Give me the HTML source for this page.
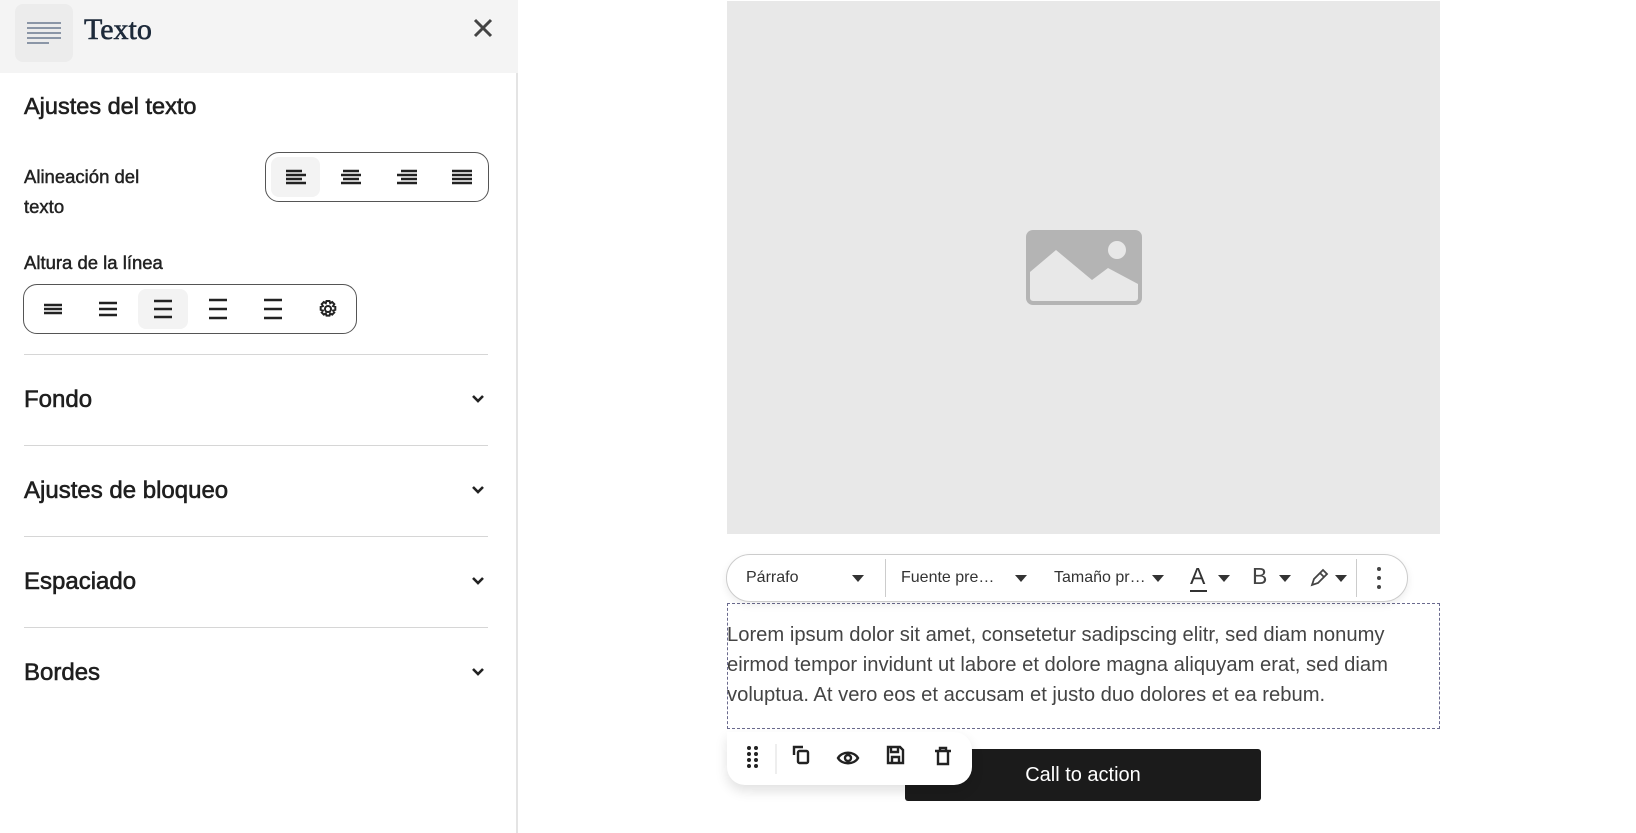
<!DOCTYPE html>
<html><head><meta charset="utf-8"><style>
*{box-sizing:border-box;margin:0;padding:0}
body{width:1636px;height:833px;position:relative;overflow:hidden;background:#fff;font-family:"Liberation Sans",Arial,sans-serif;color:#1e1e1e}
.a{position:absolute}
.side{left:0;top:0;width:518px;height:833px;border-right:2px solid #e4e4e4;background:#fff}
.hdr{left:0;top:0;width:518px;height:73px;background:#f4f4f4}
.sec{left:24px;font-size:24px;color:#1f1f1f;-webkit-text-stroke:.6px #1f1f1f}
.hr{left:24px;width:464px;height:1px;background:#d6d6d6}
.chev{left:470px}
.lbl{font-size:18.5px;color:#222;-webkit-text-stroke:.45px #222}
.grp{border:1.5px solid #555;border-radius:14px;background:#fff}
.tb{font-size:16px;color:#333}
.car{width:0;height:0;border-left:6px solid transparent;border-right:6px solid transparent;border-top:7px solid #333}
</style></head><body>
<div class="a side"></div>
<div class="a hdr"></div>
<div class="a" style="left:15px;top:4px;width:58px;height:58px;border-radius:8px;background:#ececec"></div>
<svg class="a" style="left:27px;top:22px" width="36" height="24"><g stroke="#6b7a90" stroke-width="1.6"><line x1="0" y1="1" x2="34" y2="1"/><line x1="0" y1="6" x2="34" y2="6"/><line x1="0" y1="11" x2="34" y2="11"/><line x1="0" y1="16" x2="34" y2="16"/><line x1="0" y1="21" x2="22" y2="21"/></g></svg>
<div class="a" style="left:84px;top:13px;font-family:'Liberation Serif',serif;font-size:30px;color:#1d2a3a;-webkit-text-stroke:.6px #1d2a3a">Texto</div>
<svg class="a" style="left:473px;top:18px" width="20" height="20"><path d="M2 2L18 18M18 2L2 18" stroke="#444" stroke-width="3"/></svg>
<div class="a" style="left:24px;top:93px;font-size:23.5px;color:#1f1f1f;-webkit-text-stroke:.6px #1f1f1f">Ajustes del texto</div>
<div class="a lbl" style="left:24px;top:162px;line-height:30px">Alineación del<br>texto</div>
<div class="a grp" style="left:265px;top:152px;width:224px;height:50px"></div>
<div class="a" style="left:271px;top:157px;width:49px;height:40px;border-radius:8px;background:#f3f3f3"></div>
<svg class="a" style="left:265px;top:152px" width="224" height="50"><g stroke="#222" stroke-width="2.4">
<path d="M21 19h16M21 23h20M21 27h16M21 31h20"/>
<path d="M78 19h16M76 23h20M78 27h16M76 31h20"/>
<path d="M136 19h16M132 23h20M136 27h16M132 31h20"/>
<path d="M187 19h20M187 23h20M187 27h20M187 31h20"/></g></svg>
<div class="a lbl" style="left:24px;top:252px">Altura de la línea</div>
<div class="a grp" style="left:23px;top:284px;width:334px;height:50px"></div>
<div class="a" style="left:138px;top:289px;width:50px;height:40px;border-radius:8px;background:#f3f3f3"></div>
<svg class="a" style="left:23px;top:284px" width="334" height="50"><g stroke="#222" stroke-width="2.4">
<path d="M21 21h18M21 25h18M21 29h18"/>
<path d="M76 19h18M76 25h18M76 31h18"/>
<path d="M131 17h18M131 25h18M131 33h18"/>
<path d="M186 16h18M186 25h18M186 34h18"/>
<path d="M241 16h18M241 25h18M241 34h18"/></g>
<g transform="translate(305 25)" fill="none" stroke="#222" stroke-width="2"><circle r="3"/><path d="M-1.5 -8h3l.7 2.2 2-1.2 2.1 2.1-1.2 2 2.2.7v3l-2.2.7 1.2 2-2.1 2.1-2-1.2-.7 2.2h-3l-.7-2.2-2 1.2-2.1-2.1 1.2-2-2.2-.7v-3l2.2-.7-1.2-2 2.1-2.1 2 1.2z"/></g></svg>
<div class="a hr" style="top:354px"></div>
<div class="a hr" style="top:445px"></div>
<div class="a hr" style="top:536px"></div>
<div class="a hr" style="top:627px"></div>
<div class="a sec" style="top:386px">Fondo</div>
<div class="a sec" style="top:477px">Ajustes de bloqueo</div>
<div class="a sec" style="top:568px">Espaciado</div>
<div class="a sec" style="top:659px">Bordes</div>
<svg class="a chev" style="top:393px" width="16" height="12"><path d="M3 3l5 5 5-5" stroke="#222" stroke-width="2.6" fill="none"/></svg>
<svg class="a chev" style="top:484px" width="16" height="12"><path d="M3 3l5 5 5-5" stroke="#222" stroke-width="2.6" fill="none"/></svg>
<svg class="a chev" style="top:575px" width="16" height="12"><path d="M3 3l5 5 5-5" stroke="#222" stroke-width="2.6" fill="none"/></svg>
<svg class="a chev" style="top:666px" width="16" height="12"><path d="M3 3l5 5 5-5" stroke="#222" stroke-width="2.6" fill="none"/></svg>

<div class="a" style="left:727px;top:1px;width:713px;height:533px;background:#e8e8e8"></div>
<svg class="a" style="left:1024px;top:228px" width="120" height="79"><rect x="2" y="2" width="116" height="75" rx="7" fill="#b4b4b4"/><path d="M6 44L32 22 68 52 84 40 114 56V70a3 3 0 0 1-3 3H9a3 3 0 0 1-3-3z" fill="#e8e8e8"/><circle cx="93" cy="22" r="9" fill="#e8e8e8"/></svg>

<div class="a" style="left:727px;top:603px;width:713px;height:126px;border:1px dashed #6a6a8e"></div>
<div class="a" style="left:727px;top:620px;width:720px;font-size:20.2px;line-height:30px;color:#444;white-space:nowrap">Lorem ipsum dolor sit amet, consetetur sadipscing elitr, sed diam nonumy<br>eirmod tempor invidunt ut labore et dolore magna aliquyam erat, sed diam<br>voluptua. At vero eos et accusam et justo duo dolores et ea rebum.</div>

<div class="a" style="left:726px;top:554px;width:682px;height:48px;border:1px solid #ccc;border-radius:24px;background:#fff;box-shadow:0 3px 8px rgba(0,0,0,.08)"></div>
<div class="a tb" style="left:746px;top:569px">Párrafo</div><div class="a car" style="left:852px;top:575px"></div>
<div class="a" style="left:885px;top:559px;width:1px;height:38px;background:#ccc"></div>
<div class="a tb" style="left:901px;top:569px">Fuente pre…</div><div class="a car" style="left:1015px;top:575px"></div>
<div class="a tb" style="left:1054px;top:569px">Tamaño pr…</div><div class="a car" style="left:1152px;top:575px"></div>
<div class="a" style="left:1190px;top:563px;font-size:23px;color:#333">A</div><div class="a" style="left:1190px;top:590px;width:17px;height:2px;background:#333"></div><div class="a car" style="left:1218px;top:575px"></div>
<div class="a" style="left:1252px;top:563px;font-size:23px;color:#444">B</div><div class="a car" style="left:1279px;top:575px"></div>
<svg class="a" style="left:1308px;top:567px" width="22" height="22"><path d="M4 18l2-6 9-9 4 4-9 9-6 2zM12 6l4 4" stroke="#444" stroke-width="1.8" fill="none"/></svg><div class="a car" style="left:1335px;top:575px"></div>
<div class="a" style="left:1356px;top:559px;width:1px;height:38px;background:#ccc"></div>
<svg class="a" style="left:1374px;top:566px" width="10" height="24"><circle cx="5" cy="3" r="2" fill="#444"/><circle cx="5" cy="12" r="2" fill="#444"/><circle cx="5" cy="21" r="2" fill="#444"/></svg>

<div class="a" style="left:905px;top:749px;width:356px;height:52px;background:#1b1b1b;border-radius:3px;color:#fff;font-size:20px;text-align:center;line-height:52px">Call to action</div>
<div class="a" style="left:727px;top:732px;width:245px;height:53px;background:#fff;border-radius:0 18px 18px 18px;box-shadow:0 6px 12px rgba(0,0,0,.12)"></div>
<svg class="a" style="left:727px;top:732px" width="245" height="53"><g fill="#222"><circle cx="22" cy="16" r="2"/><circle cx="29" cy="16" r="2"/><circle cx="22" cy="22" r="2"/><circle cx="29" cy="22" r="2"/><circle cx="22" cy="28" r="2"/><circle cx="29" cy="28" r="2"/><circle cx="22" cy="34" r="2"/><circle cx="29" cy="34" r="2"/></g>
<line x1="49" y1="12" x2="49" y2="42" stroke="#ddd"/>
<g fill="none" stroke="#222" stroke-width="2.4"><path d="M67 23v-8h9"/><rect x="71" y="19" width="10" height="12" rx="1.5"/>
<path d="M111 26c4-7 16-7 20 0-4 7-16 7-20 0z"/><circle cx="121" cy="26" r="3"/>
<path d="M161 15h12l3 3v13h-15z"/><path d="M164 15v5h7v-5M165 31v-6h7v6"/>
<path d="M208 19h16M213 19v-3h6v3M211 19v13h10v-13"/></g></svg>
</body></html>
